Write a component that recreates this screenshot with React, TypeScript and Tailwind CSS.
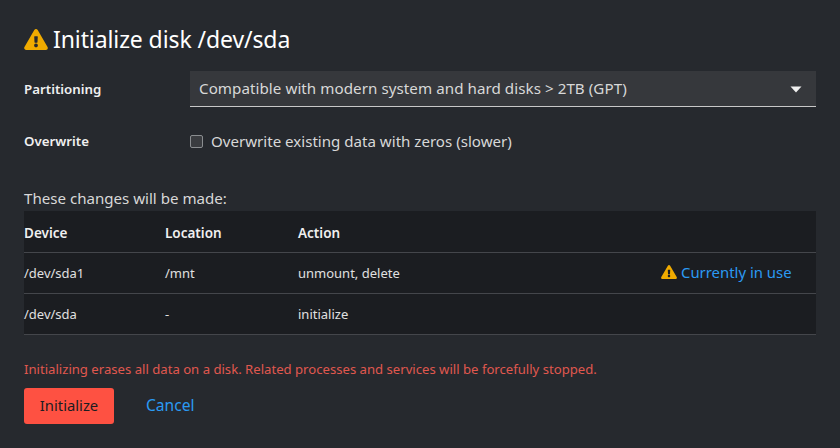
const Warn = ({ className }: { className: string }) => (
  <svg viewBox="0 0 576 512" className={className} fill="#f0ab00">
    <path d="M569.517 440.013C587.975 472.007 564.806 512 527.94 512H48.054c-36.937 0-59.999-40.055-41.577-71.987L246.423 23.985c18.467-32.009 64.72-31.951 83.154 0l239.94 416.028zM288 354c-25.405 0-46 20.595-46 46s20.595 46 46 46 46-20.595 46-46-20.595-46-46-46zm-43.673-165.346l7.418 136c.347 6.364 5.609 11.346 11.982 11.346h48.546c6.373 0 11.635-4.982 11.982-11.346l7.418-136c.375-6.874-5.098-12.654-11.982-12.654h-63.383c-6.884 0-12.356 5.78-11.981 12.654z" />
  </svg>
);

const th = "text-left font-semibold text-[13.5px] text-[#f0f0f0] h-[41px] p-0 pt-[4px]";
const td = "text-[13px] text-[#e0e0e0] h-[41px] p-0 pt-[3px] border-t border-[#44464b]";

export default function App() {
  return (
    <div className="w-[840px] h-[448px] overflow-hidden bg-[#26292e] text-[#e0e0e0] font-['Noto_Sans',sans-serif] pl-6 pr-6 pt-6">
      <div className="flex items-center h-[30px] gap-[5px]">
        <Warn className="w-6 h-[21px] shrink-0" />
        <h1 className="text-[23px] leading-[30px] text-white tracking-[-0.1px]">Initialize disk /dev/sda</h1>
      </div>

      <div className="grid grid-cols-[166px_626px] mt-[17px] items-center">
        <label className="text-[13.3px] font-semibold text-[#f0f0f0] pt-[1px]">Partitioning</label>
        <div className="h-[36px] bg-[#36383c] border-b border-[#c8c8c8] flex items-center justify-between pl-[9px] pr-[14px]">
          <span className="text-[15.15px] text-[#d8d8d8] tracking-[0.06px]">Compatible with modern system and hard disks &gt; 2TB (GPT)</span>
          <svg viewBox="0 0 12 7" className="w-[12px] h-[7px] mt-[1px]" fill="#f0f0f0"><path d="M0.5 0.5h11L6 6.5z" /></svg>
        </div>
      </div>

      <div className="grid grid-cols-[166px_626px] mt-[17px] items-center h-[36px]">
        <label className="text-[13.3px] font-semibold text-[#f0f0f0]">Overwrite</label>
        <div className="flex items-center gap-[8px]">
          <span className="w-[13px] h-[13px] rounded-[2px] border border-[#8a8d90] bg-[#3a3c40]" />
          <span className="text-[15.1px] text-[#d8d8d8] -mt-[1px]">Overwrite existing data with zeros (slower)</span>
        </div>
      </div>

      <p className="mt-[28px] h-[20px] text-[15.1px] leading-[20px] text-[#d8d8d8]">These changes will be made:</p>

      <table className="w-[792px] table-fixed bg-[#1b1d21] border-b border-[#44464b] mt-[3px]">
        <colgroup>
          <col className="w-[141px]" />
          <col className="w-[133px]" />
          <col />
          <col className="w-[188px]" />
        </colgroup>
        <thead>
          <tr>
            <th className={th}>Device</th>
            <th className={th}>Location</th>
            <th className={th}>Action</th>
            <th className={th}></th>
          </tr>
        </thead>
        <tbody>
          <tr>
            <td className={td}>/dev/sda1</td>
            <td className={td}>/mnt</td>
            <td className={td}>unmount, delete</td>
            <td className="h-[41px] p-0 border-t border-[#44464b]">
              <div className="flex items-center gap-[4px] pl-[33px]">
                <Warn className="w-4 h-[14px] shrink-0" />
                <span className="text-[14.9px] text-[#2b9af3]">Currently in use</span>
              </div>
            </td>
          </tr>
          <tr>
            <td className={td}>/dev/sda</td>
            <td className={td}>-</td>
            <td className={td}>initialize</td>
            <td className={td}></td>
          </tr>
        </tbody>
      </table>

      <p className="mt-[25px] text-[13.14px] leading-[18px] text-[#e0584e]">Initializing erases all data on a disk. Related processes and services will be forcefully stopped.</p>

      <div className="flex items-center mt-[10px]">
        <button className="w-[90px] h-[36px] rounded-[3px] bg-[#fe5142] text-[#1b1d21] text-[14.8px]">Initialize</button>
        <button className="ml-[32px] text-[15.6px] text-[#2b9af3]">Cancel</button>
      </div>
    </div>
  );
}
